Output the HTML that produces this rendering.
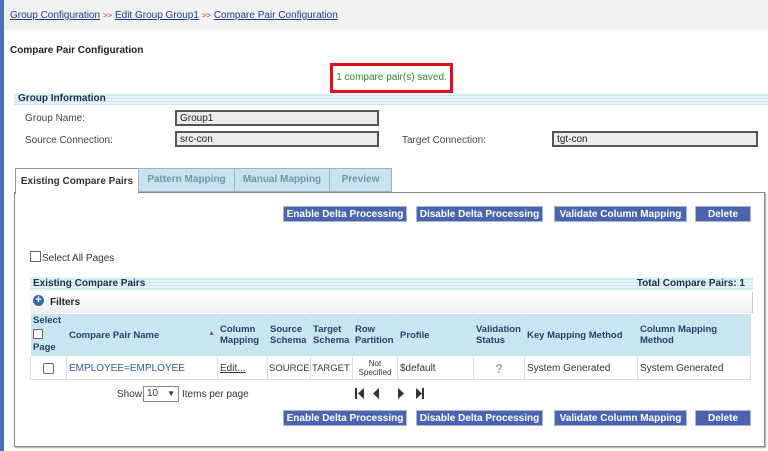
<html><head><style>
body{margin:0;width:768px;height:451px;background:#fff;font-family:"Liberation Sans",sans-serif;font-size:10px;position:relative;overflow:hidden;color:#333}
.a{position:absolute}
a{color:#1a3c8a;text-decoration:underline}
.btn{position:absolute;height:16px;background:#4a64b0;color:#fff;font-weight:bold;font-size:10px;text-align:center;line-height:16px;border:1px solid #a8b6d8;box-sizing:border-box}
.inp{position:absolute;height:16px;background:#ececec;border:2px solid #555;box-sizing:border-box;font-size:10px;line-height:12px;padding-left:3px;color:#222}
.bar{position:absolute;background:repeating-linear-gradient(#e6f4f8 0 2px,#c9e6ef 2px 3px);font-weight:bold;color:#1c2f55}
table{border-collapse:collapse;position:absolute;left:30px;top:313px;width:720px;font-size:10px;table-layout:fixed}
th{background:#c8e6f2;color:#2a3f66;text-align:left;border:1px solid #fff;border-right:1px solid #dde;padding:1px 2px;font-size:9.5px;overflow:hidden}
td{border:1px solid #d8dde6;padding:2px;height:19px;color:#333;overflow:hidden;white-space:nowrap}
</style></head><body>
<div class="a" style="left:0;top:0;width:4px;height:451px;background:#4d6fb8"></div>
<div class="a" style="left:4px;top:0;width:764px;height:30px;background:#f1f1f1"></div>
<div class="a" style="left:10px;top:10px"><a>Group Configuration</a> <span style="color:#c33;font-size:8px">&gt;&gt;</span> <a>Edit Group Group1</a> <span style="color:#c33;font-size:8px">&gt;&gt;</span> <a>Compare Pair Configuration</a></div>
<div class="a" style="left:10px;top:45px;font-weight:bold;color:#222">Compare Pair Configuration</div>
<div class="a" style="left:330px;top:63px;width:123px;height:30px;border:3px solid #e0101a;box-sizing:border-box;color:#2e8b2e;text-align:center;line-height:24px">1 compare pair(s) saved.</div>
<div class="bar" style="left:14px;top:93px;width:754px;height:12px;line-height:12px;padding-left:4px">Group Information</div>
<div class="a" style="left:25px;top:113px;color:#444">Group Name:</div>
<div class="inp" style="left:175px;top:110px;width:204px;line-height:14px">Group1</div>
<div class="a" style="left:25px;top:135px;color:#444">Source Connection:</div>
<div class="inp" style="left:175px;top:131px;width:204px;line-height:14px">src-con</div>
<div class="a" style="left:402px;top:135px;color:#444">Target Connection:</div>
<div class="inp" style="left:552px;top:131px;width:206px;line-height:14px">tgt-con</div>
<div class="a" style="left:14px;top:192px;width:751px;height:255px;border:1px solid #888;box-shadow:1px 1px 1px #aaa;box-sizing:border-box"></div>
<div class="a" style="left:15px;top:168px;width:122px;height:25px;background:#fff;border:1px solid #999;border-bottom:none;font-weight:bold;text-align:center;line-height:26px;color:#333">Existing Compare Pairs</div>
<div class="a" style="left:138px;top:168px;width:95px;height:22px;background:#c5e4ef;border:1px solid #aac;font-weight:bold;text-align:center;line-height:22px;color:#7a92a8">Pattern Mapping</div>
<div class="a" style="left:234px;top:168px;width:94px;height:22px;background:#c5e4ef;border:1px solid #aac;font-weight:bold;text-align:center;line-height:22px;color:#7a92a8">Manual Mapping</div>
<div class="a" style="left:329px;top:168px;width:61px;height:22px;background:#c5e4ef;border:1px solid #aac;font-weight:bold;text-align:center;line-height:22px;color:#7a92a8">Preview</div>
<div class="btn" style="left:283px;top:206px;width:124px">Enable Delta Processing</div>
<div class="btn" style="left:416px;top:206px;width:127px">Disable Delta Processing</div>
<div class="btn" style="left:554px;top:206px;width:133px">Validate Column Mapping</div>
<div class="btn" style="left:695px;top:206px;width:56px">Delete</div>
<div class="a" style="left:30px;top:251px;width:9px;height:9px;border:1px solid #666"></div>
<div class="a" style="left:42px;top:253px">Select All Pages</div>
<div class="bar" style="left:30px;top:277px;width:720px;height:14px;line-height:14px;padding-left:3px"><span>Existing Compare Pairs</span><span style="position:absolute;right:8px">Total Compare Pairs: 1</span></div>
<div class="a" style="left:30px;top:292px;width:722px;height:21px;background:linear-gradient(#fff,#eceef0);border-right:1px solid #ccc"></div>
<div class="a" style="left:33px;top:295px;width:11px;height:11px;border-radius:50%;background:#3a65b0;color:#fff;font-size:11px;line-height:11px;text-align:center;font-weight:bold">+</div>
<div class="a" style="left:50px;top:297px;font-weight:bold;color:#222">Filters</div>
<table>
<colgroup><col style="width:36px"><col style="width:151px"><col style="width:50px"><col style="width:43px"><col style="width:42px"><col style="width:45px"><col style="width:76px"><col style="width:51px"><col style="width:113px"><col style="width:113px"></colgroup>
<tr style="height:43px"><th style="vertical-align:top;line-height:11px">Select<br><span style="display:inline-block;width:8px;height:8px;border:1px solid #666;background:#fff;margin:3px 0"></span><br>Page</th><th>Compare Pair Name <span style="float:right;font-size:7px;color:#666">▲</span></th><th>Column Mapping</th><th>Source Schema</th><th>Target Schema</th><th>Row Partition</th><th>Profile</th><th>Validation Status</th><th>Key Mapping Method</th><th>Column Mapping Method</th></tr>
<tr><td style="text-align:center"><span style="display:inline-block;width:9px;height:9px;border:1px solid #666;border-radius:2px"></span></td><td style="color:#2a5aa5">EMPLOYEE=EMPLOYEE</td><td><a style="color:#333">Edit...</a></td><td style="padding:1px;font-size:9.5px">SOURCE</td><td style="padding:1px;font-size:9.5px">TARGET</td><td style="text-align:center;font-size:8px;line-height:9px;white-space:normal">Not Specified</td><td>$default</td><td style="text-align:center;color:#aaa;font-weight:bold;font-size:13px">?</td><td>System Generated</td><td>System Generated</td></tr>
</table>
<div class="a" style="left:117px;top:389px">Show</div>
<div class="a" style="left:143px;top:386px;width:36px;height:16px;border:1px solid #888;box-sizing:border-box;padding-left:3px;line-height:14px">10 <span style="position:absolute;right:3px;font-size:8px">▼</span></div>
<div class="a" style="left:182px;top:389px">Items per page</div>
<svg class="a" style="left:354px;top:387px" width="72" height="13" fill="#333"><rect x="1" y="1" width="2" height="11"/><path d="M10 1L4 6.5 10 12z"/><path d="M25 1L19 6.5 25 12z"/><path d="M44 1L50 6.5 44 12z"/><path d="M62 1L68 6.5 62 12z"/><rect x="68" y="1" width="2" height="11"/></svg>
<div class="btn" style="left:283px;top:410px;width:124px">Enable Delta Processing</div>
<div class="btn" style="left:416px;top:410px;width:127px">Disable Delta Processing</div>
<div class="btn" style="left:554px;top:410px;width:133px">Validate Column Mapping</div>
<div class="btn" style="left:695px;top:410px;width:56px">Delete</div>
</body></html>
